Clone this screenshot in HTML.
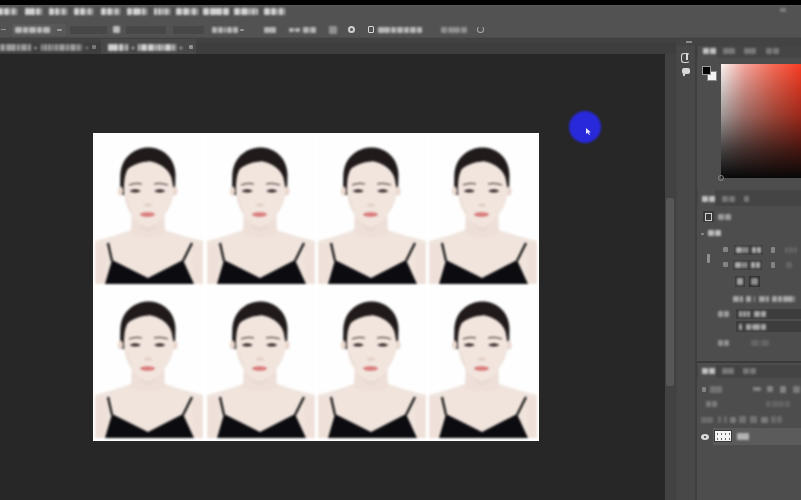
<!DOCTYPE html>
<html><head><meta charset="utf-8">
<style>
*{margin:0;padding:0;box-sizing:border-box}
html,body{width:801px;height:500px;overflow:hidden;background:#272727;font-family:"Liberation Sans",sans-serif;}
.a{position:absolute}
</style></head><body>
<div class="a" style="left:0px;top:0px;width:801px;height:5px;background:#000000;"></div>
<div class="a" style="left:0px;top:5px;width:801px;height:34px;background:#525252;"></div>
<div class="a" style="left:0px;top:5px;width:801px;height:1px;background:#5a5a5a;"></div>
<div class="a" style="left:-2px;top:8px;width:19px;height:7px;opacity:0.9;filter:blur(0.8px)"><div class="a" style="left:0.00px;top:0;width:5.07px;height:7px;background:#e0e0e0;border-radius:1px;"></div><div class="a" style="left:5.91px;top:0;width:5.07px;height:7px;background:#e0e0e0;border-radius:1px;"></div><div class="a" style="left:11.82px;top:0;width:1.27px;height:7px;background:#e0e0e0;border-radius:1px;"></div><div class="a" style="left:13.93px;top:0;width:2.96px;height:7px;background:#e0e0e0;border-radius:1px;"></div><div class="a" style="left:17.73px;top:0;width:1.27px;height:7px;background:#e0e0e0;border-radius:1px;"></div></div>
<div class="a" style="left:25px;top:8px;width:17px;height:7px;opacity:0.9;filter:blur(0.8px)"><div class="a" style="left:0.00px;top:0;width:4.53px;height:7px;background:#e0e0e0;border-radius:1px;"></div><div class="a" style="left:5.29px;top:0;width:4.53px;height:7px;background:#e0e0e0;border-radius:1px;"></div><div class="a" style="left:10.58px;top:0;width:1.13px;height:7px;background:#e0e0e0;border-radius:1px;"></div><div class="a" style="left:12.47px;top:0;width:2.64px;height:7px;background:#e0e0e0;border-radius:1px;"></div><div class="a" style="left:15.87px;top:0;width:1.13px;height:7px;background:#e0e0e0;border-radius:1px;"></div></div>
<div class="a" style="left:49px;top:8px;width:18px;height:7px;opacity:0.9;filter:blur(0.8px)"><div class="a" style="left:0.00px;top:0;width:4.80px;height:7px;background:#e0e0e0;border-radius:1px;"></div><div class="a" style="left:5.60px;top:0;width:4.80px;height:7px;background:#e0e0e0;border-radius:1px;"></div><div class="a" style="left:11.20px;top:0;width:1.20px;height:7px;background:#e0e0e0;border-radius:1px;"></div><div class="a" style="left:13.20px;top:0;width:2.80px;height:7px;background:#e0e0e0;border-radius:1px;"></div><div class="a" style="left:16.80px;top:0;width:1.20px;height:7px;background:#e0e0e0;border-radius:1px;"></div></div>
<div class="a" style="left:74px;top:8px;width:19px;height:7px;opacity:0.9;filter:blur(0.8px)"><div class="a" style="left:0.00px;top:0;width:5.07px;height:7px;background:#e0e0e0;border-radius:1px;"></div><div class="a" style="left:5.91px;top:0;width:5.07px;height:7px;background:#e0e0e0;border-radius:1px;"></div><div class="a" style="left:11.82px;top:0;width:1.27px;height:7px;background:#e0e0e0;border-radius:1px;"></div><div class="a" style="left:13.93px;top:0;width:2.96px;height:7px;background:#e0e0e0;border-radius:1px;"></div><div class="a" style="left:17.73px;top:0;width:1.27px;height:7px;background:#e0e0e0;border-radius:1px;"></div></div>
<div class="a" style="left:101px;top:8px;width:19px;height:7px;opacity:0.9;filter:blur(0.8px)"><div class="a" style="left:0.00px;top:0;width:5.07px;height:7px;background:#e0e0e0;border-radius:1px;"></div><div class="a" style="left:5.91px;top:0;width:5.07px;height:7px;background:#e0e0e0;border-radius:1px;"></div><div class="a" style="left:11.82px;top:0;width:1.27px;height:7px;background:#e0e0e0;border-radius:1px;"></div><div class="a" style="left:13.93px;top:0;width:2.96px;height:7px;background:#e0e0e0;border-radius:1px;"></div><div class="a" style="left:17.73px;top:0;width:1.27px;height:7px;background:#e0e0e0;border-radius:1px;"></div></div>
<div class="a" style="left:127px;top:8px;width:20px;height:7px;opacity:0.9;filter:blur(0.8px)"><div class="a" style="left:0.00px;top:0;width:5.33px;height:7px;background:#e0e0e0;border-radius:1px;"></div><div class="a" style="left:6.22px;top:0;width:5.33px;height:7px;background:#e0e0e0;border-radius:1px;"></div><div class="a" style="left:12.44px;top:0;width:1.33px;height:7px;background:#e0e0e0;border-radius:1px;"></div><div class="a" style="left:14.67px;top:0;width:3.11px;height:7px;background:#e0e0e0;border-radius:1px;"></div><div class="a" style="left:18.67px;top:0;width:1.33px;height:7px;background:#e0e0e0;border-radius:1px;"></div></div>
<div class="a" style="left:154px;top:8px;width:16px;height:7px;opacity:0.9;filter:blur(0.8px)"><div class="a" style="left:0.00px;top:0;width:3.20px;height:7px;background:#e0e0e0;border-radius:1px;"></div><div class="a" style="left:4.11px;top:0;width:3.20px;height:7px;background:#e0e0e0;border-radius:1px;"></div><div class="a" style="left:8.23px;top:0;width:1.37px;height:7px;background:#e0e0e0;border-radius:1px;"></div><div class="a" style="left:10.51px;top:0;width:3.20px;height:7px;background:#e0e0e0;border-radius:1px;"></div><div class="a" style="left:14.63px;top:0;width:1.37px;height:7px;background:#e0e0e0;border-radius:1px;"></div></div>
<div class="a" style="left:176px;top:8px;width:22px;height:7px;opacity:0.9;filter:blur(0.8px)"><div class="a" style="left:0.00px;top:0;width:5.87px;height:7px;background:#e0e0e0;border-radius:1px;"></div><div class="a" style="left:6.84px;top:0;width:5.87px;height:7px;background:#e0e0e0;border-radius:1px;"></div><div class="a" style="left:13.69px;top:0;width:1.47px;height:7px;background:#e0e0e0;border-radius:1px;"></div><div class="a" style="left:16.13px;top:0;width:3.42px;height:7px;background:#e0e0e0;border-radius:1px;"></div><div class="a" style="left:20.53px;top:0;width:1.47px;height:7px;background:#e0e0e0;border-radius:1px;"></div></div>
<div class="a" style="left:203px;top:8px;width:26px;height:7px;opacity:0.9;filter:blur(0.8px)"><div class="a" style="left:0.00px;top:0;width:5.78px;height:7px;background:#e0e0e0;border-radius:1px;"></div><div class="a" style="left:6.74px;top:0;width:5.78px;height:7px;background:#e0e0e0;border-radius:1px;"></div><div class="a" style="left:13.48px;top:0;width:5.78px;height:7px;background:#e0e0e0;border-radius:1px;"></div><div class="a" style="left:20.22px;top:0;width:5.78px;height:7px;background:#e0e0e0;border-radius:1px;"></div></div>
<div class="a" style="left:234px;top:8px;width:24px;height:7px;opacity:0.9;filter:blur(0.8px)"><div class="a" style="left:0.00px;top:0;width:6.40px;height:7px;background:#e0e0e0;border-radius:1px;"></div><div class="a" style="left:7.47px;top:0;width:6.40px;height:7px;background:#e0e0e0;border-radius:1px;"></div><div class="a" style="left:14.93px;top:0;width:1.60px;height:7px;background:#e0e0e0;border-radius:1px;"></div><div class="a" style="left:17.60px;top:0;width:3.73px;height:7px;background:#e0e0e0;border-radius:1px;"></div><div class="a" style="left:22.40px;top:0;width:1.60px;height:7px;background:#e0e0e0;border-radius:1px;"></div></div>
<div class="a" style="left:264px;top:8px;width:21px;height:7px;opacity:0.9;filter:blur(0.8px)"><div class="a" style="left:0.00px;top:0;width:5.60px;height:7px;background:#e0e0e0;border-radius:1px;"></div><div class="a" style="left:6.53px;top:0;width:5.60px;height:7px;background:#e0e0e0;border-radius:1px;"></div><div class="a" style="left:13.07px;top:0;width:1.40px;height:7px;background:#e0e0e0;border-radius:1px;"></div><div class="a" style="left:15.40px;top:0;width:3.27px;height:7px;background:#e0e0e0;border-radius:1px;"></div><div class="a" style="left:19.60px;top:0;width:1.40px;height:7px;background:#e0e0e0;border-radius:1px;"></div></div>
<div class="a" style="left:780px;top:8px;width:6px;height:4px;background:#9a9a9a;opacity:0.6;filter:blur(0.8px)"></div>
<div class="a" style="left:1px;top:29px;width:5px;height:1px;background:#aaa;opacity:0.8;filter:blur(0.5px);border-radius:1px"></div>
<div class="a" style="left:12px;top:24px;width:54px;height:12px;background:#585858;filter:blur(0.6px)"></div>
<div class="a" style="left:15px;top:27px;width:35px;height:6px;opacity:0.8;filter:blur(0.8px)"><div class="a" style="left:0.00px;top:0;width:7.24px;height:6px;background:#d4d4d4;border-radius:1px;"></div><div class="a" style="left:8.45px;top:0;width:4.22px;height:6px;background:#d4d4d4;border-radius:1px;"></div><div class="a" style="left:13.88px;top:0;width:7.24px;height:6px;background:#d4d4d4;border-radius:1px;"></div><div class="a" style="left:22.33px;top:0;width:4.22px;height:6px;background:#d4d4d4;border-radius:1px;"></div><div class="a" style="left:27.76px;top:0;width:7.24px;height:6px;background:#d4d4d4;border-radius:1px;"></div></div>
<div class="a" style="left:57px;top:29px;width:5px;height:2px;background:#aaa;opacity:0.8;filter:blur(0.5px);border-radius:1px"></div>
<div class="a" style="left:70px;top:26px;width:37px;height:8px;background:#474747;filter:blur(0.6px)"></div>
<div class="a" style="left:113px;top:26px;width:7px;height:7px;background:#d8d8d8;opacity:0.8;filter:blur(0.8px);border-radius:1px"></div>
<div class="a" style="left:126px;top:26px;width:40px;height:8px;background:#474747;filter:blur(0.6px)"></div>
<div class="a" style="left:173px;top:26px;width:31px;height:8px;background:#474747;filter:blur(0.6px)"></div>
<div class="a" style="left:212px;top:27px;width:26px;height:6px;opacity:0.8;filter:blur(0.8px)"><div class="a" style="left:0.00px;top:0;width:5.29px;height:6px;background:#cfcfcf;border-radius:1px;"></div><div class="a" style="left:6.17px;top:0;width:5.29px;height:6px;background:#cfcfcf;border-radius:1px;"></div><div class="a" style="left:12.34px;top:0;width:1.32px;height:6px;background:#cfcfcf;border-radius:1px;"></div><div class="a" style="left:14.54px;top:0;width:5.29px;height:6px;background:#cfcfcf;border-radius:1px;"></div><div class="a" style="left:20.71px;top:0;width:5.29px;height:6px;background:#cfcfcf;border-radius:1px;"></div></div>
<div class="a" style="left:240px;top:29px;width:4px;height:2px;background:#aaa;opacity:0.8;filter:blur(0.5px);border-radius:1px"></div>
<div class="a" style="left:264px;top:27px;width:12px;height:6px;opacity:0.8;filter:blur(0.8px)"><div class="a" style="left:0.00px;top:0;width:5.54px;height:6px;background:#cccccc;border-radius:1px;"></div><div class="a" style="left:6.46px;top:0;width:5.54px;height:6px;background:#cccccc;border-radius:1px;"></div></div>
<div class="a" style="left:289px;top:28px;width:11px;height:4px;opacity:0.8;filter:blur(0.8px)"><div class="a" style="left:0.00px;top:0;width:5.08px;height:4px;background:#d0d0d0;border-radius:1px;"></div><div class="a" style="left:5.92px;top:0;width:5.08px;height:4px;background:#d0d0d0;border-radius:1px;"></div></div>
<div class="a" style="left:303px;top:27px;width:13px;height:6px;opacity:0.8;filter:blur(0.8px)"><div class="a" style="left:0.00px;top:0;width:6.00px;height:6px;background:#cccccc;border-radius:1px;"></div><div class="a" style="left:7.00px;top:0;width:6.00px;height:6px;background:#cccccc;border-radius:1px;"></div></div>
<div class="a" style="left:329px;top:26px;width:8px;height:8px;background:#bdbdbd;opacity:0.6;filter:blur(0.8px);border-radius:1px"></div>
<div class="a" style="left:348px;top:26px;width:7px;height:7px;border:2px solid #d0d0d0;border-radius:50%;filter:blur(0.5px)"></div>
<div class="a" style="left:368px;top:26px;width:6px;height:7px;border:1.5px solid #d8d8d8;border-radius:1px;filter:blur(0.4px)"></div>
<div class="a" style="left:378px;top:27px;width:44px;height:6px;opacity:0.8;filter:blur(0.8px)"><div class="a" style="left:0.00px;top:0;width:5.50px;height:6px;background:#d0d0d0;border-radius:1px;"></div><div class="a" style="left:6.42px;top:0;width:5.50px;height:6px;background:#d0d0d0;border-radius:1px;"></div><div class="a" style="left:12.83px;top:0;width:5.50px;height:6px;background:#d0d0d0;border-radius:1px;"></div><div class="a" style="left:19.25px;top:0;width:5.50px;height:6px;background:#d0d0d0;border-radius:1px;"></div><div class="a" style="left:25.67px;top:0;width:5.50px;height:6px;background:#d0d0d0;border-radius:1px;"></div><div class="a" style="left:32.08px;top:0;width:5.50px;height:6px;background:#d0d0d0;border-radius:1px;"></div><div class="a" style="left:38.50px;top:0;width:5.50px;height:6px;background:#d0d0d0;border-radius:1px;"></div></div>
<div class="a" style="left:441px;top:27px;width:26px;height:6px;opacity:0.7;filter:blur(0.8px)"><div class="a" style="left:0.00px;top:0;width:5.78px;height:6px;background:#aaaaaa;border-radius:1px;"></div><div class="a" style="left:6.74px;top:0;width:5.78px;height:6px;background:#aaaaaa;border-radius:1px;"></div><div class="a" style="left:13.48px;top:0;width:5.78px;height:6px;background:#aaaaaa;border-radius:1px;"></div><div class="a" style="left:20.22px;top:0;width:5.78px;height:6px;background:#aaaaaa;border-radius:1px;"></div></div>
<div class="a" style="left:477px;top:26px;width:7px;height:7px;border:1.5px solid #aaa;border-radius:50%;border-top-color:transparent;filter:blur(0.5px)"></div>
<div class="a" style="left:0px;top:38px;width:801px;height:16px;background:#3e3e3e;"></div>
<div class="a" style="left:0px;top:38px;width:801px;height:4px;background:#434343;filter:blur(1px)"></div>
<div class="a" style="left:101px;top:39px;width:95px;height:15px;background:#484848;"></div>
<div class="a" style="left:0px;top:44px;width:88px;height:7px;opacity:0.75;filter:blur(0.8px)"><div class="a" style="left:0.00px;top:0;width:4.87px;height:7px;background:#bcbcbc;border-radius:1px;"></div><div class="a" style="left:5.68px;top:0;width:4.87px;height:7px;background:#bcbcbc;border-radius:1px;"></div><div class="a" style="left:11.35px;top:0;width:4.87px;height:7px;background:#bcbcbc;border-radius:1px;"></div><div class="a" style="left:17.03px;top:0;width:2.84px;height:7px;background:#bcbcbc;border-radius:1px;"></div><div class="a" style="left:20.68px;top:0;width:2.84px;height:7px;background:#bcbcbc;border-radius:1px;"></div><div class="a" style="left:24.33px;top:0;width:2.84px;height:7px;background:#bcbcbc;border-radius:1px;"></div><div class="a" style="left:27.98px;top:0;width:2.84px;height:7px;background:#bcbcbc;border-radius:1px;"></div><div class="a" style="left:34.47px;top:2.5px;width:2.43px;height:2px;background:#bcbcbc;"></div><div class="a" style="left:40.55px;top:0;width:2.84px;height:7px;background:#bcbcbc;border-radius:1px;"></div><div class="a" style="left:44.20px;top:0;width:2.84px;height:7px;background:#bcbcbc;border-radius:1px;"></div><div class="a" style="left:47.85px;top:0;width:2.84px;height:7px;background:#bcbcbc;border-radius:1px;"></div><div class="a" style="left:51.50px;top:0;width:2.84px;height:7px;background:#bcbcbc;border-radius:1px;"></div><div class="a" style="left:55.15px;top:0;width:2.84px;height:7px;background:#bcbcbc;border-radius:1px;"></div><div class="a" style="left:58.80px;top:0;width:2.84px;height:7px;background:#bcbcbc;border-radius:1px;"></div><div class="a" style="left:62.45px;top:0;width:2.84px;height:7px;background:#bcbcbc;border-radius:1px;"></div><div class="a" style="left:66.10px;top:0;width:2.84px;height:7px;background:#bcbcbc;border-radius:1px;"></div><div class="a" style="left:69.75px;top:0;width:2.84px;height:7px;background:#bcbcbc;border-radius:1px;"></div><div class="a" style="left:73.40px;top:0;width:2.84px;height:7px;background:#bcbcbc;border-radius:1px;"></div><div class="a" style="left:77.05px;top:0;width:2.84px;height:7px;background:#bcbcbc;border-radius:1px;"></div><div class="a" style="left:80.70px;top:0;width:1.22px;height:7px;background:#bcbcbc;border-radius:1px;"></div><div class="a" style="left:85.57px;top:2.5px;width:2.43px;height:2px;background:#bcbcbc;"></div></div>
<div class="a" style="left:92px;top:45px;width:4px;height:4px;background:#a0a0a0;opacity:0.6;filter:blur(0.6px);border-radius:1px"></div>
<div class="a" style="left:108px;top:44px;width:74px;height:7px;opacity:0.9;filter:blur(0.8px)"><div class="a" style="left:0.00px;top:0;width:4.55px;height:7px;background:#e0e0e0;border-radius:1px;"></div><div class="a" style="left:5.31px;top:0;width:4.55px;height:7px;background:#e0e0e0;border-radius:1px;"></div><div class="a" style="left:10.63px;top:0;width:4.55px;height:7px;background:#e0e0e0;border-radius:1px;"></div><div class="a" style="left:15.94px;top:0;width:1.14px;height:7px;background:#e0e0e0;border-radius:1px;"></div><div class="a" style="left:17.84px;top:0;width:2.66px;height:7px;background:#e0e0e0;border-radius:1px;"></div><div class="a" style="left:23.91px;top:2.5px;width:2.28px;height:2px;background:#e0e0e0;"></div><div class="a" style="left:29.60px;top:0;width:2.66px;height:7px;background:#e0e0e0;border-radius:1px;"></div><div class="a" style="left:33.02px;top:0;width:2.66px;height:7px;background:#e0e0e0;border-radius:1px;"></div><div class="a" style="left:36.43px;top:0;width:2.66px;height:7px;background:#e0e0e0;border-radius:1px;"></div><div class="a" style="left:39.85px;top:0;width:2.66px;height:7px;background:#e0e0e0;border-radius:1px;"></div><div class="a" style="left:43.26px;top:0;width:2.66px;height:7px;background:#e0e0e0;border-radius:1px;"></div><div class="a" style="left:46.68px;top:0;width:2.66px;height:7px;background:#e0e0e0;border-radius:1px;"></div><div class="a" style="left:50.09px;top:0;width:2.66px;height:7px;background:#e0e0e0;border-radius:1px;"></div><div class="a" style="left:53.51px;top:0;width:2.66px;height:7px;background:#e0e0e0;border-radius:1px;"></div><div class="a" style="left:56.92px;top:0;width:2.66px;height:7px;background:#e0e0e0;border-radius:1px;"></div><div class="a" style="left:60.34px;top:0;width:2.66px;height:7px;background:#e0e0e0;border-radius:1px;"></div><div class="a" style="left:63.75px;top:0;width:2.66px;height:7px;background:#e0e0e0;border-radius:1px;"></div><div class="a" style="left:67.17px;top:0;width:1.14px;height:7px;background:#e0e0e0;border-radius:1px;"></div><div class="a" style="left:71.72px;top:2.5px;width:2.28px;height:2px;background:#e0e0e0;"></div></div>
<div class="a" style="left:189px;top:45px;width:4px;height:4px;background:#c0c0c0;opacity:0.6;filter:blur(0.6px);border-radius:1px"></div>
<div class="a" style="left:0px;top:54px;width:665px;height:446px;background:#272727;"></div>
<div class="a" style="left:665px;top:54px;width:11px;height:446px;background:#424242;"></div>
<div class="a" style="left:666px;top:198px;width:8px;height:188px;background:#575757;border-radius:2px;"></div>
<div class="a" style="left:676px;top:39px;width:125px;height:7px;background:#434343;"></div>
<div class="a" style="left:676px;top:46px;width:20px;height:454px;background:#484848;"></div>
<div class="a" style="left:676px;top:46px;width:1px;height:454px;background:#444444;"></div>
<div class="a" style="left:695px;top:46px;width:2px;height:454px;background:#3e3e3e;"></div>
<div class="a" style="left:697px;top:46px;width:104px;height:454px;background:#4d4d4d;"></div>
<div class="a" style="left:686px;top:41px;width:6px;height:2px;background:#8a8a8a;filter:blur(0.6px)"></div>
<div class="a" style="left:681px;top:53px;width:9px;height:10px;border:1.5px solid #d8d8d8;border-radius:3px;border-right-color:transparent;filter:blur(0.6px)"></div>
<div class="a" style="left:686px;top:54px;width:1.5px;height:6px;background:#d8d8d8;filter:blur(0.6px)"></div>
<div class="a" style="left:682px;top:68px;width:8px;height:6px;background:#d8d8d8;border-radius:2px;filter:blur(0.7px)"></div>
<div class="a" style="left:683px;top:74px;width:2px;height:2px;background:#d8d8d8;filter:blur(0.6px)"></div>
<div class="a" style="left:697px;top:46px;width:104px;height:12px;background:#454545;"></div>
<div class="a" style="left:698px;top:46px;width:19px;height:12px;background:#4d4d4d;"></div>
<div class="a" style="left:703px;top:48px;width:13px;height:6px;opacity:0.8;filter:blur(0.8px)"><div class="a" style="left:0.00px;top:0;width:6.00px;height:6px;background:#dddddd;border-radius:1px;"></div><div class="a" style="left:7.00px;top:0;width:6.00px;height:6px;background:#dddddd;border-radius:1px;"></div></div>
<div class="a" style="left:723px;top:48px;width:12px;height:6px;opacity:0.6;filter:blur(0.8px)"><div class="a" style="left:0.00px;top:0;width:5.54px;height:6px;background:#9a9a9a;border-radius:1px;"></div><div class="a" style="left:6.46px;top:0;width:5.54px;height:6px;background:#9a9a9a;border-radius:1px;"></div></div>
<div class="a" style="left:744px;top:48px;width:12px;height:6px;opacity:0.6;filter:blur(0.8px)"><div class="a" style="left:0.00px;top:0;width:5.54px;height:6px;background:#9a9a9a;border-radius:1px;"></div><div class="a" style="left:6.46px;top:0;width:5.54px;height:6px;background:#9a9a9a;border-radius:1px;"></div></div>
<div class="a" style="left:766px;top:48px;width:13px;height:6px;opacity:0.6;filter:blur(0.8px)"><div class="a" style="left:0.00px;top:0;width:6.00px;height:6px;background:#9a9a9a;border-radius:1px;"></div><div class="a" style="left:7.00px;top:0;width:6.00px;height:6px;background:#9a9a9a;border-radius:1px;"></div></div>
<div class="a" style="left:707px;top:71px;width:10px;height:10px;background:#f4f4f4;border:1px solid #888;"></div>
<div class="a" style="left:702px;top:66px;width:9px;height:9px;background:#050505;border:1px solid #999;"></div>
<div class="a" style="left:721px;top:64px;width:80px;height:114px;background:linear-gradient(to bottom,rgba(8,8,8,0) 0%,rgba(8,8,8,0.38) 45%,rgba(8,8,8,0.75) 75%,#080808 100%),linear-gradient(to right,#fbf3f1 0%,#f4a49a 30%,#f66a55 65%,#f83c24 100%);"></div>
<div class="a" style="left:718px;top:175px;width:6px;height:6px;border:1px solid #888;border-radius:50%;filter:blur(0.4px)"></div>
<div class="a" style="left:697px;top:190px;width:104px;height:16px;background:#444444;"></div>
<div class="a" style="left:698px;top:190px;width:17px;height:16px;background:#4d4d4d;"></div>
<div class="a" style="left:702px;top:196px;width:13px;height:6px;opacity:0.8;filter:blur(0.8px)"><div class="a" style="left:0.00px;top:0;width:6.00px;height:6px;background:#dddddd;border-radius:1px;"></div><div class="a" style="left:7.00px;top:0;width:6.00px;height:6px;background:#dddddd;border-radius:1px;"></div></div>
<div class="a" style="left:722px;top:196px;width:13px;height:6px;opacity:0.6;filter:blur(0.8px)"><div class="a" style="left:0.00px;top:0;width:6.00px;height:6px;background:#9a9a9a;border-radius:1px;"></div><div class="a" style="left:7.00px;top:0;width:6.00px;height:6px;background:#9a9a9a;border-radius:1px;"></div></div>
<div class="a" style="left:744px;top:196px;width:5px;height:6px;opacity:0.6;filter:blur(0.8px)"><div class="a" style="left:0.00px;top:0;width:5.00px;height:6px;background:#9a9a9a;border-radius:1px;"></div></div>
<div class="a" style="left:703px;top:211px;width:11px;height:11px;background:#3a3a3a;"></div>
<div class="a" style="left:705px;top:213px;width:7px;height:8px;border:1px solid #cfcfcf;filter:blur(0.4px)"></div>
<div class="a" style="left:718px;top:214px;width:13px;height:6px;opacity:0.7;filter:blur(0.8px)"><div class="a" style="left:0.00px;top:0;width:6.00px;height:6px;background:#bdbdbd;border-radius:1px;"></div><div class="a" style="left:7.00px;top:0;width:6.00px;height:6px;background:#bdbdbd;border-radius:1px;"></div></div>
<div class="a" style="left:701px;top:233px;width:3px;height:2px;background:#aaa;opacity:0.7;filter:blur(0.5px);border-radius:1px"></div>
<div class="a" style="left:708px;top:230px;width:13px;height:6px;opacity:0.8;filter:blur(0.8px)"><div class="a" style="left:0.00px;top:0;width:6.00px;height:6px;background:#d8d8d8;border-radius:1px;"></div><div class="a" style="left:7.00px;top:0;width:6.00px;height:6px;background:#d8d8d8;border-radius:1px;"></div></div>
<div class="a" style="left:723px;top:247px;width:5px;height:5px;background:#aaa;opacity:0.6;filter:blur(0.7px);border-radius:1px"></div>
<div class="a" style="left:734px;top:245px;width:29px;height:10px;background:#3e3e3e;filter:blur(0.5px)"></div>
<div class="a" style="left:736px;top:247px;width:25px;height:6px;opacity:0.75;filter:blur(0.8px)"><div class="a" style="left:0.00px;top:0;width:2.54px;height:6px;background:#d4d4d4;border-radius:1px;"></div><div class="a" style="left:3.26px;top:0;width:2.54px;height:6px;background:#d4d4d4;border-radius:1px;"></div><div class="a" style="left:6.52px;top:0;width:2.54px;height:6px;background:#d4d4d4;border-radius:1px;"></div><div class="a" style="left:9.78px;top:0;width:2.54px;height:6px;background:#d4d4d4;border-radius:1px;"></div><div class="a" style="left:15.58px;top:0;width:4.35px;height:6px;background:#d4d4d4;border-radius:1px;"></div><div class="a" style="left:20.65px;top:0;width:4.35px;height:6px;background:#d4d4d4;border-radius:1px;"></div></div>
<div class="a" style="left:771px;top:247px;width:4px;height:6px;background:#aaa;opacity:0.6;filter:blur(0.7px);border-radius:1px"></div>
<div class="a" style="left:785px;top:247px;width:12px;height:6px;opacity:0.4;filter:blur(0.8px)"><div class="a" style="left:0.00px;top:0;width:3.36px;height:6px;background:#888;border-radius:1px;"></div><div class="a" style="left:4.32px;top:0;width:3.36px;height:6px;background:#888;border-radius:1px;"></div><div class="a" style="left:8.64px;top:0;width:3.36px;height:6px;background:#888;border-radius:1px;"></div></div>
<div class="a" style="left:723px;top:262px;width:5px;height:5px;background:#aaa;opacity:0.6;filter:blur(0.7px);border-radius:1px"></div>
<div class="a" style="left:733px;top:260px;width:29px;height:10px;background:#3e3e3e;filter:blur(0.5px)"></div>
<div class="a" style="left:735px;top:262px;width:25px;height:6px;opacity:0.75;filter:blur(0.8px)"><div class="a" style="left:0.00px;top:0;width:2.54px;height:6px;background:#d4d4d4;border-radius:1px;"></div><div class="a" style="left:3.26px;top:0;width:2.54px;height:6px;background:#d4d4d4;border-radius:1px;"></div><div class="a" style="left:6.52px;top:0;width:2.54px;height:6px;background:#d4d4d4;border-radius:1px;"></div><div class="a" style="left:9.78px;top:0;width:2.54px;height:6px;background:#d4d4d4;border-radius:1px;"></div><div class="a" style="left:15.58px;top:0;width:4.35px;height:6px;background:#d4d4d4;border-radius:1px;"></div><div class="a" style="left:20.65px;top:0;width:4.35px;height:6px;background:#d4d4d4;border-radius:1px;"></div></div>
<div class="a" style="left:771px;top:262px;width:4px;height:6px;background:#aaa;opacity:0.6;filter:blur(0.7px);border-radius:1px"></div>
<div class="a" style="left:786px;top:262px;width:6px;height:6px;background:#888;opacity:0.4;filter:blur(0.8px);border-radius:1px"></div>
<div class="a" style="left:707px;top:254px;width:3px;height:9px;background:#bbb;opacity:0.6;filter:blur(0.7px);border-radius:1px"></div>
<div class="a" style="left:735px;top:276px;width:10px;height:11px;background:#3a3a3a;"></div>
<div class="a" style="left:737px;top:278px;width:6px;height:7px;background:#cfcfcf;opacity:0.7;filter:blur(0.8px);border-radius:1px"></div>
<div class="a" style="left:749px;top:276px;width:11px;height:11px;background:#2f2f2f;"></div>
<div class="a" style="left:751px;top:278px;width:7px;height:7px;background:#cfcfcf;opacity:0.6;filter:blur(0.8px);border-radius:1px"></div>
<div class="a" style="left:733px;top:296px;width:62px;height:6px;opacity:0.7;filter:blur(0.8px)"><div class="a" style="left:0.00px;top:0;width:2.71px;height:6px;background:#cccccc;border-radius:1px;"></div><div class="a" style="left:3.49px;top:0;width:2.71px;height:6px;background:#cccccc;border-radius:1px;"></div><div class="a" style="left:6.97px;top:0;width:2.71px;height:6px;background:#cccccc;border-radius:1px;"></div><div class="a" style="left:13.17px;top:0;width:4.65px;height:6px;background:#cccccc;border-radius:1px;"></div><div class="a" style="left:21.31px;top:0;width:1.16px;height:6px;background:#cccccc;border-radius:1px;"></div><div class="a" style="left:25.96px;top:0;width:2.71px;height:6px;background:#cccccc;border-radius:1px;"></div><div class="a" style="left:29.45px;top:0;width:2.71px;height:6px;background:#cccccc;border-radius:1px;"></div><div class="a" style="left:32.94px;top:0;width:2.71px;height:6px;background:#cccccc;border-radius:1px;"></div><div class="a" style="left:39.14px;top:0;width:4.65px;height:6px;background:#cccccc;border-radius:1px;"></div><div class="a" style="left:44.56px;top:0;width:4.65px;height:6px;background:#cccccc;border-radius:1px;"></div><div class="a" style="left:49.99px;top:0;width:4.65px;height:6px;background:#cccccc;border-radius:1px;"></div><div class="a" style="left:55.41px;top:0;width:4.65px;height:6px;background:#cccccc;border-radius:1px;"></div><div class="a" style="left:60.84px;top:0;width:1.16px;height:6px;background:#cccccc;border-radius:1px;"></div></div>
<div class="a" style="left:718px;top:311px;width:11px;height:6px;opacity:0.7;filter:blur(0.8px)"><div class="a" style="left:0.00px;top:0;width:5.08px;height:6px;background:#bdbdbd;border-radius:1px;"></div><div class="a" style="left:5.92px;top:0;width:5.08px;height:6px;background:#bdbdbd;border-radius:1px;"></div></div>
<div class="a" style="left:736px;top:309px;width:65px;height:10px;background:#3d3d3d;filter:blur(0.5px)"></div>
<div class="a" style="left:739px;top:311px;width:27px;height:6px;opacity:0.7;filter:blur(0.8px)"><div class="a" style="left:0.00px;top:0;width:3.15px;height:6px;background:#d0d0d0;border-radius:1px;"></div><div class="a" style="left:4.05px;top:0;width:3.15px;height:6px;background:#d0d0d0;border-radius:1px;"></div><div class="a" style="left:8.10px;top:0;width:3.15px;height:6px;background:#d0d0d0;border-radius:1px;"></div><div class="a" style="left:15.30px;top:0;width:5.40px;height:6px;background:#d0d0d0;border-radius:1px;"></div><div class="a" style="left:21.60px;top:0;width:5.40px;height:6px;background:#d0d0d0;border-radius:1px;"></div></div>
<div class="a" style="left:736px;top:321px;width:65px;height:11px;background:#3d3d3d;filter:blur(0.5px)"></div>
<div class="a" style="left:739px;top:324px;width:27px;height:6px;opacity:0.7;filter:blur(0.8px)"><div class="a" style="left:0.00px;top:0;width:3.10px;height:6px;background:#d0d0d0;border-radius:1px;"></div><div class="a" style="left:7.08px;top:0;width:5.31px;height:6px;background:#d0d0d0;border-radius:1px;"></div><div class="a" style="left:13.28px;top:0;width:1.33px;height:6px;background:#d0d0d0;border-radius:1px;"></div><div class="a" style="left:15.49px;top:0;width:5.31px;height:6px;background:#d0d0d0;border-radius:1px;"></div><div class="a" style="left:21.69px;top:0;width:5.31px;height:6px;background:#d0d0d0;border-radius:1px;"></div></div>
<div class="a" style="left:718px;top:340px;width:11px;height:6px;opacity:0.6;filter:blur(0.8px)"><div class="a" style="left:0.00px;top:0;width:5.08px;height:6px;background:#bdbdbd;border-radius:1px;"></div><div class="a" style="left:5.92px;top:0;width:5.08px;height:6px;background:#bdbdbd;border-radius:1px;"></div></div>
<div class="a" style="left:751px;top:340px;width:18px;height:6px;opacity:0.4;filter:blur(0.8px)"><div class="a" style="left:0.00px;top:0;width:8.31px;height:6px;background:#888;border-radius:1px;"></div><div class="a" style="left:9.69px;top:0;width:8.31px;height:6px;background:#888;border-radius:1px;"></div></div>
<div class="a" style="left:697px;top:361px;width:104px;height:2px;background:#3a3a3a;"></div>
<div class="a" style="left:697px;top:365px;width:104px;height:13px;background:#444444;"></div>
<div class="a" style="left:698px;top:365px;width:18px;height:13px;background:#4d4d4d;"></div>
<div class="a" style="left:702px;top:368px;width:13px;height:6px;opacity:0.8;filter:blur(0.8px)"><div class="a" style="left:0.00px;top:0;width:6.00px;height:6px;background:#dddddd;border-radius:1px;"></div><div class="a" style="left:7.00px;top:0;width:6.00px;height:6px;background:#dddddd;border-radius:1px;"></div></div>
<div class="a" style="left:722px;top:368px;width:12px;height:6px;opacity:0.6;filter:blur(0.8px)"><div class="a" style="left:0.00px;top:0;width:5.54px;height:6px;background:#9a9a9a;border-radius:1px;"></div><div class="a" style="left:6.46px;top:0;width:5.54px;height:6px;background:#9a9a9a;border-radius:1px;"></div></div>
<div class="a" style="left:743px;top:368px;width:13px;height:6px;opacity:0.6;filter:blur(0.8px)"><div class="a" style="left:0.00px;top:0;width:6.00px;height:6px;background:#9a9a9a;border-radius:1px;"></div><div class="a" style="left:7.00px;top:0;width:6.00px;height:6px;background:#9a9a9a;border-radius:1px;"></div></div>
<div class="a" style="left:702px;top:387px;width:4px;height:5px;background:#aaa;opacity:0.6;filter:blur(0.7px);border-radius:1px"></div>
<div class="a" style="left:710px;top:386px;width:12px;height:7px;opacity:0.5;filter:blur(0.8px)"><div class="a" style="left:0.00px;top:0;width:5.54px;height:7px;background:#999;border-radius:1px;"></div><div class="a" style="left:6.46px;top:0;width:5.54px;height:7px;background:#999;border-radius:1px;"></div></div>
<div class="a" style="left:753px;top:387px;width:8px;height:4px;background:#aaa;opacity:0.6;filter:blur(0.8px);border-radius:1px"></div>
<div class="a" style="left:767px;top:386px;width:6px;height:6px;background:#aaa;opacity:0.6;filter:blur(0.8px);border-radius:1px"></div>
<div class="a" style="left:780px;top:386px;width:6px;height:7px;background:#aaa;opacity:0.6;filter:blur(0.8px);border-radius:1px"></div>
<div class="a" style="left:793px;top:386px;width:7px;height:7px;background:#aaa;opacity:0.5;filter:blur(0.8px);border-radius:1px"></div>
<div class="a" style="left:706px;top:401px;width:11px;height:6px;opacity:0.6;filter:blur(0.8px)"><div class="a" style="left:0.00px;top:0;width:5.08px;height:6px;background:#9a9a9a;border-radius:1px;"></div><div class="a" style="left:5.92px;top:0;width:5.08px;height:6px;background:#9a9a9a;border-radius:1px;"></div></div>
<div class="a" style="left:766px;top:401px;width:24px;height:6px;opacity:0.5;filter:blur(0.8px)"><div class="a" style="left:0.00px;top:0;width:5.33px;height:6px;background:#777;border-radius:1px;"></div><div class="a" style="left:6.22px;top:0;width:5.33px;height:6px;background:#777;border-radius:1px;"></div><div class="a" style="left:12.44px;top:0;width:5.33px;height:6px;background:#777;border-radius:1px;"></div><div class="a" style="left:18.67px;top:0;width:5.33px;height:6px;background:#777;border-radius:1px;"></div></div>
<div class="a" style="left:701px;top:417px;width:12px;height:6px;opacity:0.5;filter:blur(0.8px)"><div class="a" style="left:0.00px;top:0;width:5.54px;height:6px;background:#8a8a8a;border-radius:1px;"></div><div class="a" style="left:6.46px;top:0;width:5.54px;height:6px;background:#8a8a8a;border-radius:1px;"></div></div>
<div class="a" style="left:718px;top:416px;width:9px;height:7px;opacity:0.5;filter:blur(0.8px)"><div class="a" style="left:0.00px;top:0;width:3.38px;height:7px;background:#8a8a8a;border-radius:1px;"></div><div class="a" style="left:5.62px;top:0;width:3.38px;height:7px;background:#8a8a8a;border-radius:1px;"></div></div>
<div class="a" style="left:730px;top:417px;width:6px;height:6px;background:#aaa;opacity:0.5;filter:blur(0.8px);border-radius:1px"></div>
<div class="a" style="left:739px;top:416px;width:7px;height:7px;background:#999;opacity:0.5;filter:blur(0.8px);border-radius:1px"></div>
<div class="a" style="left:750px;top:416px;width:7px;height:7px;background:#999;opacity:0.5;filter:blur(0.8px);border-radius:1px"></div>
<div class="a" style="left:761px;top:417px;width:7px;height:6px;background:#aaa;opacity:0.5;filter:blur(0.8px);border-radius:1px"></div>
<div class="a" style="left:771px;top:416px;width:11px;height:7px;opacity:0.5;filter:blur(0.8px)"><div class="a" style="left:0.00px;top:0;width:4.81px;height:7px;background:#888;border-radius:1px;"></div><div class="a" style="left:6.19px;top:0;width:4.81px;height:7px;background:#888;border-radius:1px;"></div></div>
<div class="a" style="left:713px;top:428px;width:88px;height:17px;background:#5b5b5b;"></div>
<div class="a" style="left:701px;top:434px;width:8px;height:6px;background:#d8d8d8;border-radius:50%;filter:blur(0.6px)"></div>
<div class="a" style="left:704px;top:436px;width:2px;height:2px;background:#333;border-radius:50%;filter:blur(0.4px)"></div>
<div class="a" style="left:714px;top:430px;width:18px;height:12px;background:#3a3a3a;filter:blur(0.5px)"></div>
<div class="a" style="left:715px;top:431px;width:16px;height:10px;background:#f4f4f4;filter:blur(0.5px)"></div>
<div class="a" style="left:716.5px;top:432.5px;width:1.5px;height:2px;background:#666;filter:blur(0.6px);"></div>
<div class="a" style="left:720.5px;top:432.5px;width:1.5px;height:2px;background:#666;filter:blur(0.6px);"></div>
<div class="a" style="left:724.5px;top:432.5px;width:1.5px;height:2px;background:#666;filter:blur(0.6px);"></div>
<div class="a" style="left:728.5px;top:432.5px;width:1.5px;height:2px;background:#666;filter:blur(0.6px);"></div>
<div class="a" style="left:716.5px;top:437.5px;width:1.5px;height:2px;background:#666;filter:blur(0.6px);"></div>
<div class="a" style="left:720.5px;top:437.5px;width:1.5px;height:2px;background:#666;filter:blur(0.6px);"></div>
<div class="a" style="left:724.5px;top:437.5px;width:1.5px;height:2px;background:#666;filter:blur(0.6px);"></div>
<div class="a" style="left:728.5px;top:437.5px;width:1.5px;height:2px;background:#666;filter:blur(0.6px);"></div>
<div class="a" style="left:737px;top:433px;width:12px;height:7px;opacity:0.75;filter:blur(0.8px)"><div class="a" style="left:0.00px;top:0;width:5.54px;height:7px;background:#d0d0d0;border-radius:1px;"></div><div class="a" style="left:6.46px;top:0;width:5.54px;height:7px;background:#d0d0d0;border-radius:1px;"></div></div>
<div class="a" style="left:93px;top:133px;width:446px;height:308px;overflow:hidden;background:#fff"><svg class="a" style="left:0;top:0;filter:blur(0.85px)" width="446" height="308" viewBox="0 0 446 308">
<defs>
<g id="p">
 <rect x="0" y="0" width="108" height="151" fill="#fefefe"/>
 <path d="M0,108 C12,105 26,101 38,96 L68,96 C80,101 96,105 108,108 L108,151 L0,151 Z" fill="#f0e4dd"/>
 <path d="M1,112 C5,110 9,110 13,111 L11,151 L1,151 Z" fill="#efe1d9"/>
 <path d="M107,112 C103,110 99,110 96,111 L99,151 L107,151 Z" fill="#efe1d9"/>
 <path d="M37,72 L69,72 L70,100 C62,106 44,106 36,100 Z" fill="#eee0d9"/>
 <path d="M39,80 C42,90 47,97 53,99 C59,97 64,90 67,80 Z" fill="#e9dbd3"/>
 <path d="M25,62 L25.3,42 C26,25 39,14.5 53.5,14.5 C68,14.5 80,25 80.5,42 L80,62 Z" fill="#201a1a"/>
 <ellipse cx="25.5" cy="58" rx="2.5" ry="4.5" fill="#e9d8cf"/>
 <ellipse cx="80" cy="58" rx="2.5" ry="4.5" fill="#e9d8cf"/>
 <path d="M29,57 C29,49 29.5,42 32.5,36.5 C37,32 45,29.5 51,28.8 L55,28.3 L58,29 C67,31.5 74,37 76.5,45 C77.5,50 78.5,54 78.5,58 C78.5,66 76,73 71,80 C66,87 59,94 53,94 C47,94 40,87 35,80 C31,73 29,66 29,57 Z" fill="#f1e5de"/>
 <path d="M30,62 C31,70 34,76 39,82 L37,77 C34,71 33,66 30,62 Z" fill="#ecdfd8"/>
 <path d="M34,52 Q40,49.5 47,51" stroke="#574644" stroke-width="1.2" fill="none"/>
 <path d="M59,51 Q66,49.5 73,52" stroke="#574644" stroke-width="1.2" fill="none"/>
 <path d="M34.5,58 Q40,54.5 46,58 Q40,61.2 34.5,58 Z" fill="#35282a"/>
 <path d="M59,58 Q65,54.5 70.5,58 Q65,61.2 59,58 Z" fill="#35282a"/>
 <ellipse cx="53" cy="72" rx="4" ry="1.6" fill="#e0cdc2"/>
 <ellipse cx="52.5" cy="81.5" rx="7.3" ry="2.5" fill="#df8886"/>
 <path d="M45.5,81.5 Q52.5,82.5 59.5,81.5" stroke="#c8686a" stroke-width="0.8" fill="none"/>
 <path d="M17,127 L53,145 L88,127 L99,151 L10,151 Z" fill="#0c0c10"/>
 <path d="M13,110 L17,128" stroke="#111" stroke-width="2.2"/>
 <path d="M97,110 L88,128" stroke="#111" stroke-width="2.2"/>
</g>
</defs>
<rect x="0" y="0" width="446" height="308" fill="#ffffff"/>
<use href="#p" x="2" y="0"/>
<use href="#p" x="114" y="0"/>
<use href="#p" x="225" y="0"/>
<use href="#p" x="336" y="0"/>
<use href="#p" x="2" y="154"/>
<use href="#p" x="114" y="154"/>
<use href="#p" x="225" y="154"/>
<use href="#p" x="336" y="154"/>
</svg></div>
<div class="a" style="left:569px;top:111px;width:32px;height:32px;border-radius:50%;background:#2929dc;filter:blur(1px)"></div>
<svg class="a" style="left:585px;top:127px;filter:blur(0.4px)" width="7" height="9" viewBox="0 0 7 9"><path d="M1,1 L1,7 L2.6,5.8 L4.2,8 L5,7.6 L3.6,5.4 L5.8,5.2 Z" fill="#fff" opacity="0.9"/></svg>
</body></html>
